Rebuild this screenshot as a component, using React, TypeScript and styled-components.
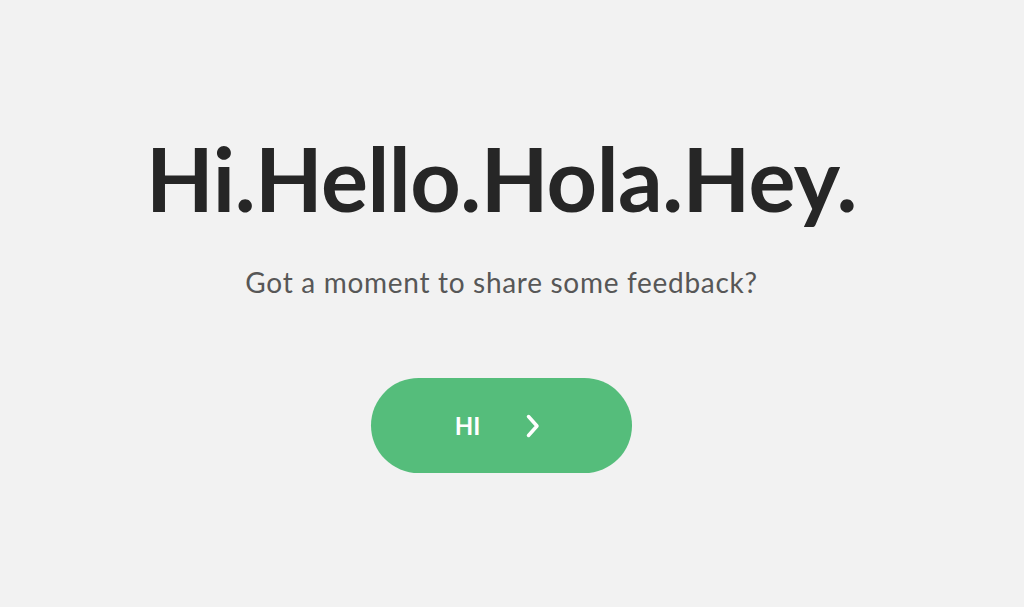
import React from 'react';
import styled, { createGlobalStyle } from 'styled-components';

const GlobalStyle = createGlobalStyle`
  html, body {
    margin: 0;
    padding: 0;
    background: #f2f2f2;
  }
  body {
    font-family: Lato, "Noto Sans", sans-serif;
  }
`;

const Page = styled.main`
  height: 607px;
  display: flex;
  flex-direction: column;
  align-items: center;
  padding: 128px 21px 0 0;
  box-sizing: border-box;
`;

const Headline = styled.h1`
  margin: 0;
  font-size: 88px;
  font-weight: 700;
  line-height: 100px;
  color: #262626;
  letter-spacing: -0.5px;
`;

const Subtitle = styled.p`
  margin: 38px 0 0;
  font-size: 28px;
  line-height: 32px;
  font-weight: 400;
  color: #575757;
  letter-spacing: 0.7px;
`;

const StartButton = styled.button`
  margin-top: 80px;
  width: 261px;
  height: 95px;
  border: none;
  border-radius: 48px;
  background: #55bd7b;
  color: #fff;
  font-family: inherit;
  font-size: 24px;
  font-weight: 700;
  display: flex;
  align-items: center;
  justify-content: center;
  gap: 46px;
  cursor: pointer;
  padding: 0 8px 0 0;
`;

const Chevron = () => (
  <svg width="14" height="24" viewBox="0 0 14 24" fill="none">
    <path d="M2.5 2.5 L11 12 L2.5 21.5" stroke="#fff" strokeWidth="3.5" strokeLinecap="round" strokeLinejoin="round" />
  </svg>
);

export default function App() {
  return (
    <>
      <GlobalStyle />
      <Page>
        <Headline>Hi.Hello.Hola.Hey.</Headline>
        <Subtitle>Got a moment to share some feedback?</Subtitle>
        <StartButton>
          <span>HI</span>
          <Chevron />
        </StartButton>
      </Page>
    </>
  );
}
